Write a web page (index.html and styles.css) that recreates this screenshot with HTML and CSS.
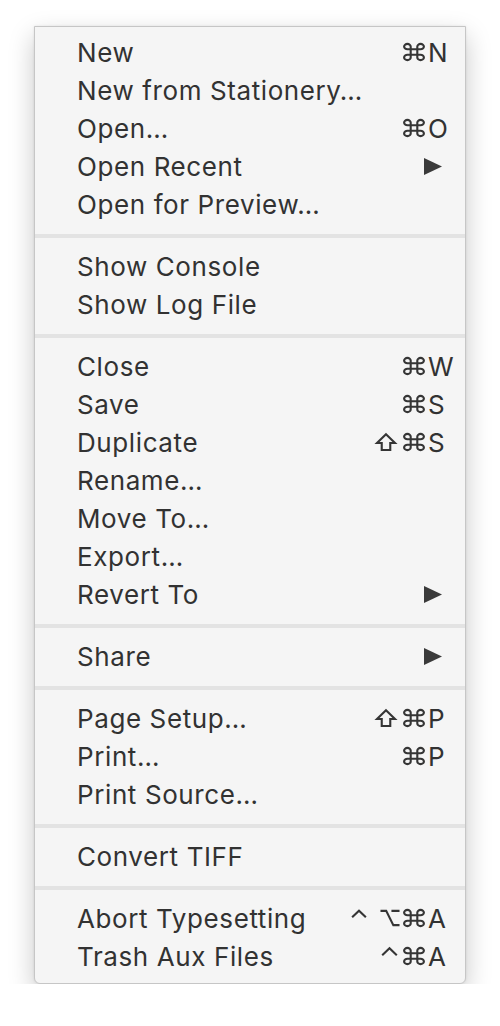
FILE: index.html
```html
<!DOCTYPE html>
<html>
<head>
<meta charset="utf-8">
<link rel="stylesheet" href="styles.css">
</head>
<body>
<div class="menu">
  <div class="row"><span class="label">New</span><span class="mods"><svg class="cmd" viewBox="2 2 20 20" preserveAspectRatio="none"><path d="M15 6v12a3 3 0 1 0 3-3H6a3 3 0 1 0 3 3V6a3 3 0 1 0-3 3h12a3 3 0 1 0-3-3"/></svg></span><span class="key">N</span></div>
  <div class="row"><span class="label">New from Stationery…</span></div>
  <div class="row"><span class="label">Open…</span><span class="mods"><svg class="cmd" viewBox="2 2 20 20" preserveAspectRatio="none"><path d="M15 6v12a3 3 0 1 0 3-3H6a3 3 0 1 0 3 3V6a3 3 0 1 0-3 3h12a3 3 0 1 0-3-3"/></svg></span><span class="key">O</span></div>
  <div class="row"><span class="label">Open Recent</span><svg class="arrow" viewBox="0 0 18 17"><path d="M0 0L18 8.5L0 17Z"/></svg></div>
  <div class="row"><span class="label">Open for Preview…</span></div>
  <div class="sep"></div>
  <div class="row"><span class="label">Show Console</span></div>
  <div class="row"><span class="label">Show Log File</span></div>
  <div class="sep"></div>
  <div class="row"><span class="label">Close</span><span class="mods"><svg class="cmd" viewBox="2 2 20 20" preserveAspectRatio="none"><path d="M15 6v12a3 3 0 1 0 3-3H6a3 3 0 1 0 3 3V6a3 3 0 1 0-3 3h12a3 3 0 1 0-3-3"/></svg></span><span class="key">W</span></div>
  <div class="row"><span class="label">Save</span><span class="mods"><svg class="cmd" viewBox="2 2 20 20" preserveAspectRatio="none"><path d="M15 6v12a3 3 0 1 0 3-3H6a3 3 0 1 0 3 3V6a3 3 0 1 0-3 3h12a3 3 0 1 0-3-3"/></svg></span><span class="key">S</span></div>
  <div class="row"><span class="label">Duplicate</span><span class="mods"><svg class="shift" viewBox="0 0 22 19"><path d="M11 1.2L20.5 10.5H15.5V18H6.5V10.5H1.5Z"/></svg><svg class="cmd" viewBox="2 2 20 20" preserveAspectRatio="none"><path d="M15 6v12a3 3 0 1 0 3-3H6a3 3 0 1 0 3 3V6a3 3 0 1 0-3 3h12a3 3 0 1 0-3-3"/></svg></span><span class="key">S</span></div>
  <div class="row"><span class="label">Rename…</span></div>
  <div class="row"><span class="label">Move To…</span></div>
  <div class="row"><span class="label">Export…</span></div>
  <div class="row"><span class="label">Revert To</span><svg class="arrow" viewBox="0 0 18 17"><path d="M0 0L18 8.5L0 17Z"/></svg></div>
  <div class="sep"></div>
  <div class="row"><span class="label">Share</span><svg class="arrow" viewBox="0 0 18 17"><path d="M0 0L18 8.5L0 17Z"/></svg></div>
  <div class="sep"></div>
  <div class="row"><span class="label">Page Setup…</span><span class="mods"><svg class="shift" viewBox="0 0 22 19"><path d="M11 1.2L20.5 10.5H15.5V18H6.5V10.5H1.5Z"/></svg><svg class="cmd" viewBox="2 2 20 20" preserveAspectRatio="none"><path d="M15 6v12a3 3 0 1 0 3-3H6a3 3 0 1 0 3 3V6a3 3 0 1 0-3 3h12a3 3 0 1 0-3-3"/></svg></span><span class="key">P</span></div>
  <div class="row"><span class="label">Print…</span><span class="mods"><svg class="cmd" viewBox="2 2 20 20" preserveAspectRatio="none"><path d="M15 6v12a3 3 0 1 0 3-3H6a3 3 0 1 0 3 3V6a3 3 0 1 0-3 3h12a3 3 0 1 0-3-3"/></svg></span><span class="key">P</span></div>
  <div class="row"><span class="label">Print Source…</span></div>
  <div class="sep"></div>
  <div class="row"><span class="label">Convert TIFF</span></div>
  <div class="sep"></div>
  <div class="row"><span class="label">Abort Typesetting</span><span class="mods"><svg class="ctrl ctrl-wide" viewBox="0 0 17 18"><path d="M1.2 8.2L8.5 1.2L15.8 8.2"/></svg><svg class="opt" viewBox="0 0 21 18"><path d="M0.5 1.5H6.5L14 16.5H20.5M12 1.5H20.5"/></svg><svg class="cmd" viewBox="2 2 20 20" preserveAspectRatio="none"><path d="M15 6v12a3 3 0 1 0 3-3H6a3 3 0 1 0 3 3V6a3 3 0 1 0-3 3h12a3 3 0 1 0-3-3"/></svg></span><span class="key">A</span></div>
  <div class="row"><span class="label">Trash Aux Files</span><span class="mods"><svg class="ctrl" viewBox="0 0 17 18"><path d="M1.2 8.2L8.5 1.2L15.8 8.2"/></svg><svg class="cmd" viewBox="2 2 20 20" preserveAspectRatio="none"><path d="M15 6v12a3 3 0 1 0 3-3H6a3 3 0 1 0 3 3V6a3 3 0 1 0-3 3h12a3 3 0 1 0-3-3"/></svg></span><span class="key">A</span></div>
</div>
</body>
</html>
```
FILE: styles.css
```css
html, body {
  margin: 0;
  padding: 0;
  background: #ffffff;
}
body {
  padding: 26px 0 0 34px;
}
.menu {
  width: 430px;
  background: #f5f5f5;
  border: 1px solid #c6c6c6;
  border-radius: 0 0 6px 6px;
  padding: 6px 0 8px;
  box-shadow: 0 10px 26px rgba(0, 0, 0, 0.22), 0 0 3px rgba(0, 0, 0, 0.08);
  font-family: "Inter", "Liberation Sans", sans-serif;
  font-size: 26px;
  letter-spacing: 0.6px;
  color: #323232;
}
.row {
  display: flex;
  align-items: center;
  height: 38px;
  padding-left: 42px;
}
.label {
  flex: 1;
  white-space: nowrap;
}
.mods {
  display: flex;
  align-items: center;
}
.mods svg {
  height: 18px;
  fill: none;
  stroke: #353535;
  stroke-width: 2.1px;
  stroke-linejoin: miter;
  overflow: visible;
}
.mods svg path {
  vector-effect: non-scaling-stroke;
}
.cmd {
  width: 22px;
  margin-right: 3px;
  stroke-width: 2px;
}
.shift {
  width: 22px;
  margin-right: 6px;
}
.opt {
  width: 20px;
  margin-right: 3px;
}
.ctrl {
  width: 17px;
  margin-right: 5px;
}
.ctrl-wide {
  width: 16px;
  margin-right: 13px;
}
.key {
  width: 37px;
}
.arrow {
  width: 18px;
  height: 17px;
  margin-right: 23px;
  fill: #3a3a3a;
}
.sep {
  height: 4px;
  background: #e3e3e3;
  margin: 11px 0 9px;
}
```
